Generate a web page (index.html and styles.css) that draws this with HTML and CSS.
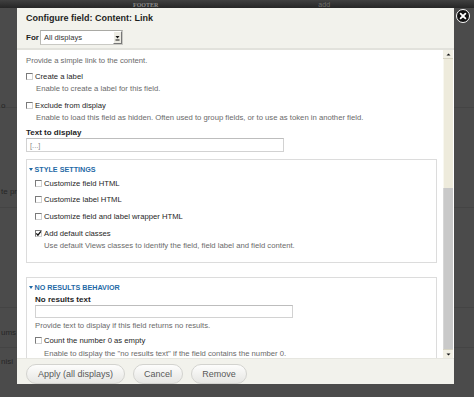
FILE: index.html
```html
<!DOCTYPE html>
<html>
<head>
<meta charset="utf-8">
<link rel="stylesheet" href="styles.css">
</head>
<body>
<div class="page">
  <div class="topbar"><span class="tb-footer">FOOTER</span><span class="tb-add">add</span></div>
  <div class="bg">
    <div class="bg-row h1">o</div>
    <div class="bg-row h2">te pr</div>
    <div class="bg-row h3"></div>
    <div class="bg-row h4">ums</div>
    <div class="bg-row h5">nisi</div>
  </div>
</div>

<div class="dialog">
  <div class="dlg-head">
    <h1 class="title">Configure field: Content: Link</h1>
    <div class="for-row">
      <span class="for-label">For</span>
      <div class="select">
        <span class="select-text">All displays</span>
        <span class="select-btn"><svg width="7" height="9" viewBox="0 0 7 9"><path d="M1.5 3 L5.5 3 L3.5 5.5 Z" fill="#111"/><rect x="1.5" y="6.5" width="4" height="1" fill="#111"/></svg></span>
      </div>
    </div>
  </div>

  <div class="dlg-body">
    <div class="content">
      <div class="desc top-desc">Provide a simple link to the content.</div>
      <div class="cb-row r-create"><span class="cb"></span>Create a label</div>
      <div class="desc ind r-d2">Enable to create a label for this field.</div>
      <div class="cb-row r-excl"><span class="cb"></span>Exclude from display</div>
      <div class="desc ind r-d3">Enable to load this field as hidden. Often used to group fields, or to use as token in another field.</div>
      <div class="flabel r-ttd">Text to display</div>
      <div class="input wide"><span class="ph">[...]</span></div>

      <div class="fieldset fs1">
        <div class="legend"><span class="tri"></span>STYLE SETTINGS</div>
        <div class="cb-row fs-cb m3"><span class="cb"></span>Customize field HTML</div>
        <div class="cb-row fs-cb m4"><span class="cb"></span>Customize label HTML</div>
        <div class="cb-row fs-cb m5"><span class="cb"></span>Customize field and label wrapper HTML</div>
        <div class="cb-row fs-cb m5"><span class="cb checked"><svg width="7" height="7" viewBox="0 0 7 7"><path d="M1.3 3.4 L2.9 5.2 L5.9 1.3" fill="none" stroke="#111" stroke-width="1.3"/></svg></span>Add default classes</div>
        <div class="desc fs-desc m1">Use default Views classes to identify the field, field label and field content.</div>
      </div>

      <div class="fieldset fs2">
        <div class="legend"><span class="tri"></span>NO RESULTS BEHAVIOR</div>
        <div class="flabel fs-in m3">No results text</div>
        <div class="input fs-in nr"></div>
        <div class="desc fs-in m2">Provide text to display if this field returns no results.</div>
        <div class="cb-row fs-cb m2"><span class="cb"></span>Count the number 0 as empty</div>
        <div class="desc fs-desc m2">Enable to display the "no results text" if the field contains the number 0.</div>
      </div>
    </div>
    <div class="scrollbar">
      <div class="sb-btn"><svg width="9" height="9" viewBox="0 0 9 9"><path d="M2.5 5.5 L6.5 5.5 L4.5 3.5 Z" fill="#111"/></svg></div>
      <div class="sb-track"></div>
      <div class="sb-thumb"></div>
      <div class="sb-btn"><svg width="9" height="9" viewBox="0 0 9 9"><path d="M2.5 3.5 L6.5 3.5 L4.5 5.5 Z" fill="#111"/></svg></div>
    </div>
  </div>

  <div class="dlg-foot">
    <span class="btn b-apply">Apply (all displays)</span>
    <span class="btn b-cancel">Cancel</span>
    <span class="btn b-remove">Remove</span>
  </div>
</div>

<div class="close"><svg width="10" height="10" viewBox="0 0 10 10"><path d="M2.6 2.6 L7.4 7.4 M7.4 2.6 L2.6 7.4" stroke="#fff" stroke-width="1.8" stroke-linecap="round"/></svg></div>
</body>
</html>
```

FILE: styles.css
```css
* { box-sizing: border-box; }
html, body { margin: 0; padding: 0; }
body {
  width: 474px;
  height: 397px;
  overflow: hidden;
  background: #4b4b4b;
  font-family: "Liberation Sans", Arial, sans-serif;
  position: relative;
}

/* background page */
.topbar {
  height: 8px;
  background: linear-gradient(#404040, #262626);
  display: flex;
  align-items: flex-start;
  padding-left: 133px;
  overflow: hidden;
}
.tb-footer { font: bold 6px/10px "Liberation Serif", serif; color: #8c8c8c; }
.tb-add { font: 7px/10px "Liberation Sans", sans-serif; color: #707070; margin-left: 160px; }
.bg { display: flex; flex-direction: column; }
.bg-row {
  font-size: 8px;
  line-height: 10px;
  color: #262626;
  padding-left: 1px;
  border-bottom: 1px solid #444;
  white-space: nowrap;
}
.h1 { height: 100px; padding-top: 93px; }
.h2 { height: 100px; padding-top: 79px; }
.h3 { height: 100px; }
.h4 { height: 40px; padding-top: 20px; }
.h5 { height: 40px; padding-top: 9px; border: 0; }

/* dialog */
.dialog {
  position: absolute;
  left: 17px;
  top: 8px;
  width: 437px;
  height: 376px;
  display: flex;
  flex-direction: column;
  background: #f2f2ec;
}
.dlg-head {
  height: 42px;
  flex: none;
  border-bottom: 2px solid #e2e2dc;
  padding: 4px 0 0 9px;
}
.title { margin: 0; font-size: 9px; line-height: 12px; font-weight: bold; color: #1e1e1e; }
.for-row { display: flex; align-items: center; margin-top: 6px; height: 15px; }
.for-label { font-size: 8px; font-weight: bold; color: #1e1e1e; width: 14px; }
.select {
  width: 83px;
  height: 15px;
  background: #fff;
  border: 1px solid #c9c9c4;
  border-top-color: #a9a9a4;
  border-left-color: #b9b9b4;
  display: flex;
  align-items: center;
  padding-left: 3px;
}
.select-text { flex: 1; font-size: 7.6px; color: #333; }
.select-btn {
  width: 9px;
  height: 13px;
  background: #ecebe3;
  border: 1px solid #fff;
  border-right-color: #777;
  border-bottom-color: #777;
  display: flex;
  align-items: center;
  justify-content: center;
}

.dlg-body { height: 308px; flex: none; display: flex; background: #fff; overflow: hidden; }
.content { flex: 1; padding: 5px 6px 0 9px; overflow: hidden; }

.desc { font-size: 7.7px; line-height: 12px; height: 12px; color: #6a6a6a; white-space: nowrap; }
.ind { padding-left: 10px; }
.cb-row { display: flex; align-items: center; height: 12px; font-size: 7.7px; color: #262626; white-space: nowrap; }
.cb {
  width: 7px;
  height: 7px;
  flex: none;
  margin-right: 2px;
  background: #fff;
  border: 1px solid #d0d0d0;
  border-top-color: #7a7a7a;
  border-left-color: #7a7a7a;
  display: flex;
  align-items: center;
  justify-content: center;
}
.cb svg { margin: -1px; }
.r-create { margin-top: 3px; }
.r-d2 { margin-top: 1px; }
.r-excl { margin-top: 4px; }
.r-d3 { margin-top: 1px; }
.flabel { font-size: 8px; line-height: 10px; height: 10px; font-weight: bold; color: #1e1e1e; }
.r-ttd { margin-top: 4px; }
.input {
  height: 14px;
  border: 1px solid #d2d2d2;
  border-top-color: #bdbdbd;
  background: #fff;
  display: flex;
  align-items: center;
  padding-left: 3px;
}
.wide { width: 258px; }
.ph { font-size: 7.5px; color: #888; }

.fieldset { border: 1px solid #dcdcdc; padding-left: 2px; }
.fs1 { margin-top: 7px; height: 104px; }
.fs2 { margin-top: 14px; height: 120px; }
.legend {
  display: flex;
  align-items: center;
  margin-top: 4px;
  height: 10px;
  font-size: 7.2px;
  font-weight: bold;
  color: #1f6aa6;
}
.tri {
  width: 0;
  height: 0;
  border-left: 2.5px solid transparent;
  border-right: 2.5px solid transparent;
  border-top: 3px solid #1f6aa6;
  margin-right: 1.5px;
}
.fs-cb { padding-left: 6px; }
.fs-desc { padding-left: 15px; }
.fs-in { margin-left: 6px; }
.nr { width: 258px; height: 13px; }
.m1 { margin-top: 1px; }
.m2 { margin-top: 2px; }
.m3 { margin-top: 3px; }
.m4 { margin-top: 4px; }
.m5 { margin-top: 5px; }

.scrollbar { width: 10px; flex: none; margin-right: 1px; display: flex; flex-direction: column; }
.sb-btn {
  height: 9px;
  background: #f1efe4;
  border-bottom: 1px solid #d6d3c2;
  display: flex;
  align-items: center;
  justify-content: center;
}
.sb-btn:last-child { border-bottom: 0; border-top: 1px solid #d6d3c2; }
.sb-track { height: 129px; background: #eeebdc; border-left: 1px solid #f8f7f0; }
.sb-thumb { flex: 1; background: #c9c9c9; border-left: 1px solid #d6d6d6; }

.dlg-foot {
  flex: 1;
  display: flex;
  gap: 8px;
  padding: 5px 0 0 9px;
  align-items: flex-start;
  border-top: 1px solid #e6e6e0;
}
.btn {
  height: 20px;
  border-radius: 10px;
  border: 1px solid #d3d3cf;
  background: linear-gradient(#fdfdfc, #e6e6e3);
  font-size: 9px;
  color: #595959;
  display: flex;
  align-items: center;
  justify-content: center;
}
.b-apply { width: 99px; }
.b-cancel { width: 50px; }
.b-remove { width: 56px; }

.close {
  position: absolute;
  left: 456px;
  top: 9px;
  width: 14px;
  height: 14px;
  border-radius: 50%;
  background: #111;
  border: 1.5px solid #fff;
  display: flex;
  align-items: center;
  justify-content: center;
}
```
